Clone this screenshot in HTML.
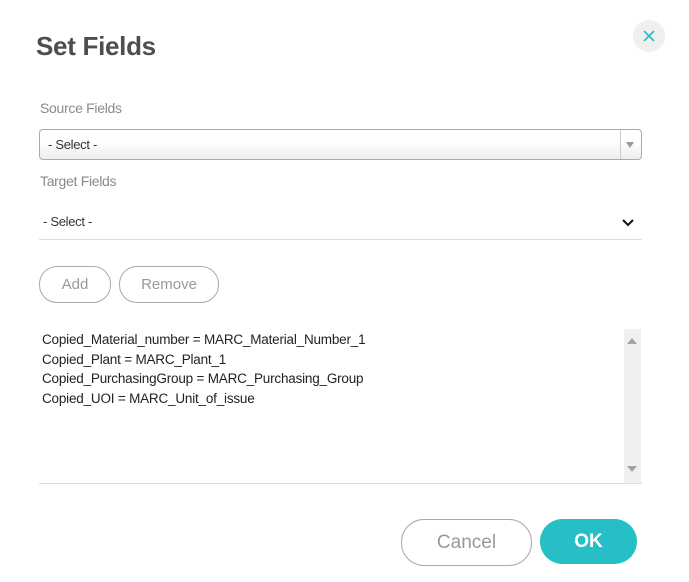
<!DOCTYPE html>
<html><head><style>
body{margin:0;width:689px;height:582px;background:#fff;font-family:"Liberation Sans",sans-serif;position:relative;overflow:hidden}
.a{position:absolute}
</style></head><body>
<div class="a" style="left:36px;top:31px;font-size:26px;font-weight:bold;color:#4a4f54;letter-spacing:-0.3px">Set Fields</div>
<div class="a" style="left:633px;top:20px;width:32px;height:32px;border-radius:50%;background:#f0f0f0"></div>
<svg class="a" style="left:642px;top:29px" width="14" height="14"><path d="M2 2L12 12M12 2L2 12" stroke="#26bfc6" stroke-width="1.6"/></svg>
<div class="a" style="left:40px;top:100px;font-size:14px;color:#8a8a8a;letter-spacing:-0.3px">Source Fields</div>
<div class="a" style="left:39px;top:129px;width:601px;height:29px;border:1px solid #aaa;border-radius:4px;background:linear-gradient(#fff 40%,#eee)"></div>
<div class="a" style="left:620px;top:130px;width:1px;height:29px;background:#ccc"></div>
<svg class="a" style="left:626px;top:142px" width="8" height="6"><path d="M0 0H8L4 6Z" fill="#999"/></svg>
<div class="a" style="left:48px;top:137px;font-size:13px;color:#333;letter-spacing:-0.3px">- Select -</div>
<div class="a" style="left:40px;top:173px;font-size:14px;color:#8a8a8a;letter-spacing:-0.3px">Target Fields</div>
<div class="a" style="left:43px;top:214px;font-size:13px;color:#333;letter-spacing:-0.3px">- Select -</div>
<svg class="a" style="left:622px;top:219px" width="12" height="8"><path d="M1 1L6 6L11 1" stroke="#111" stroke-width="2" fill="none"/></svg>
<div class="a" style="left:39px;top:239px;width:603px;height:1px;background:#ddd"></div>
<div class="a" style="left:39px;top:266px;width:70px;height:35px;border:1px solid #aaa;border-radius:18px;font-size:15px;color:#999;text-align:center;line-height:35px">Add</div>
<div class="a" style="left:119px;top:266px;width:98px;height:35px;border:1px solid #aaa;border-radius:18px;font-size:15px;color:#999;text-align:center;line-height:35px">Remove</div>
<div class="a" style="left:624px;top:329px;width:17px;height:154px;background:#f0f0f0"></div>
<svg class="a" style="left:627px;top:338px" width="10" height="6"><path d="M0 6H10L5 0Z" fill="#a3a3a3"/></svg>
<svg class="a" style="left:627px;top:466px" width="10" height="6"><path d="M0 0H10L5 6Z" fill="#a3a3a3"/></svg>
<div class="a" style="left:39px;top:483px;width:603px;height:1px;background:#ddd"></div>
<div class="a" style="left:42px;top:330px;font-size:13.5px;color:#222;line-height:19.5px;letter-spacing:-0.2px">Copied_Material_number = MARC_Material_Number_1<br>Copied_Plant = MARC_Plant_1<br>Copied_PurchasingGroup = MARC_Purchasing_Group<br>Copied_UOI = MARC_Unit_of_issue</div>
<div class="a" style="left:401px;top:519px;width:129px;height:45px;border:1px solid #aaa;border-radius:23px;font-size:19px;color:#999;text-align:center;line-height:45px">Cancel</div>
<div class="a" style="left:540px;top:519px;width:97px;height:45px;background:#26bfc6;border-radius:23px;font-size:19px;font-weight:bold;color:#fff;text-align:center;line-height:45px">OK</div>
</body></html>
